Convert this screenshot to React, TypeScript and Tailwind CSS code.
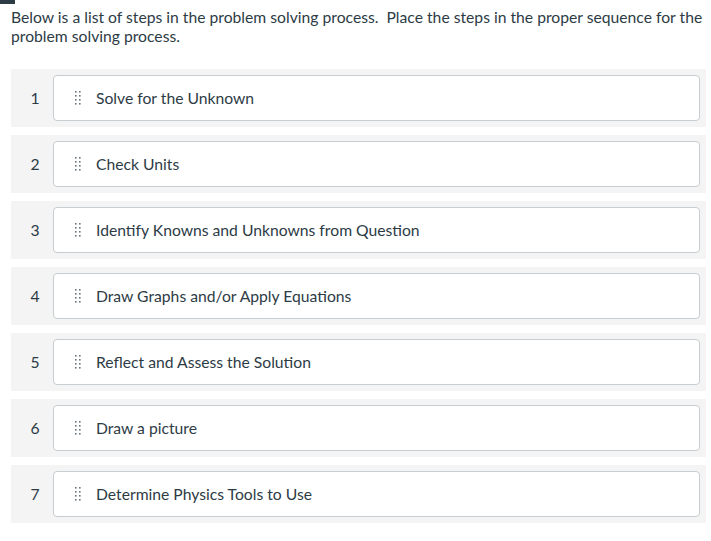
import React from "react";

const steps = [
  "Solve for the Unknown",
  "Check Units",
  "Identify Knowns and Unknowns from Question",
  "Draw Graphs and/or Apply Equations",
  "Reflect and Assess the Solution",
  "Draw a picture",
  "Determine Physics Tools to Use",
];

function Handle() {
  const dots = [];
  for (let r = 0; r < 4; r++) {
    for (let c = 0; c < 2; c++) {
      dots.push(<rect key={`${r}-${c}`} x={c * 4} y={r * 4} width={1.6} height={1.6} fill="#6b7780" />);
    }
  }
  return (
    <svg width="6" height="15" viewBox="0 0 6 15" className="shrink-0">
      {dots}
    </svg>
  );
}

export default function App() {
  return (
    <div className="relative w-[711px] h-[541px] bg-white text-[#2d3b45]" style={{ fontFamily: "Lato, 'Open Sans', sans-serif" }}>
      <div className="absolute left-0 top-0 w-[15px] h-[4px] bg-[#2d3b45]" />
      <div className="pl-[11px] pr-[5px] pt-[8px]">
        <p className="text-[15.7px] leading-[19px]">
          Below is a list of steps in the problem solving process.&nbsp; Place the steps in the proper sequence for the problem solving process.
        </p>
        <div className="mt-[23px] flex flex-col gap-[8px]">
          {steps.map((s, i) => (
            <div key={i} className="flex items-center h-[58px] bg-[#f4f4f4] pr-[6px]">
              <div className="w-[42px] text-center text-[15.7px] pl-[6px] pt-[2px]">{i + 1}</div>
              <div className="flex-1 h-[46px] bg-white border border-[#c7cdd1] rounded-[4px] flex items-center pl-[21px]">
                <Handle />
                <span className="ml-[15px] text-[15.7px] pt-[2px]">{s}</span>
              </div>
            </div>
          ))}
        </div>
      </div>
    </div>
  );
}
